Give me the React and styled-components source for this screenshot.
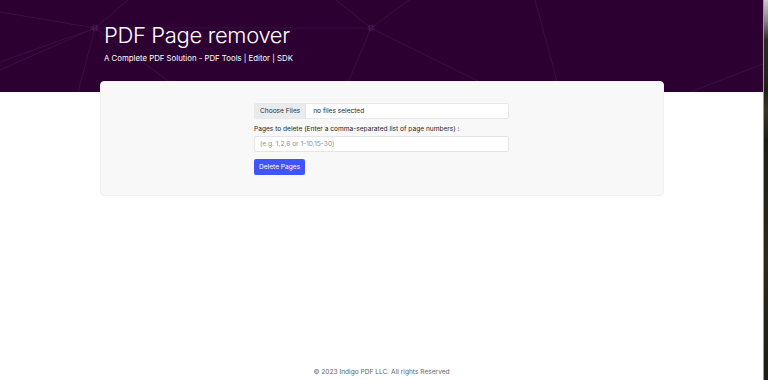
import React from "react";
import styled, { createGlobalStyle } from "styled-components";

const Global = createGlobalStyle`
  html, body { margin: 0; padding: 0; background: #ffffff; }
  body { font-family: Inter, "Noto Sans", "Liberation Sans", sans-serif; color: #212529; }
  * { box-sizing: border-box; }
`;

const Screen = styled.div`
  display: flex;
  width: 768px;
  height: 380px;
  overflow: hidden;
`;

const Page = styled.div`
  flex: 1;
  display: flex;
  flex-direction: column;
  min-width: 0;
`;

const SideStrip = styled.div`
  width: 5px;
  flex: none;
  border-left: 1px solid #9a9a9a;
  background: linear-gradient(180deg, #cfc9cf 0px, #8f8590 20px, #2a2a22 40px, #1e2018 90px, #3a3524 110px, #1c1e16 140px, #2c2a1a 260px, #1b1c15 380px);
`;

const Hero = styled.header`
  position: relative;
  height: 92px;
  background: #2d0032;
  padding: 22px 0 0 104px;
  overflow: hidden;
`;

const HeroArt = styled.svg`
  position: absolute;
  inset: 0;
  width: 100%;
  height: 100%;
`;

const HeroText = styled.div`
  position: relative;
  display: flex;
  flex-direction: column;
  gap: 5px;
`;

const Title = styled.h1`
  margin: 0;
  font-family: Inter, "Noto Sans", sans-serif;
  font-weight: 300;
  font-size: 22px;
  line-height: 26px;
  color: #ffffff;
  letter-spacing: -0.35px;
`;

const Subtitle = styled.p`
  margin: 0;
  font-size: 7.8px;
  line-height: 10px;
  color: #ffffff;
`;

const Card = styled.section`
  position: relative;
  align-self: center;
  width: 564px;
  margin-top: -11px;
  background: #f8f8f8;
  border: 1px solid #f0f0f0;
  border-radius: 4px;
  padding: 21px 0 20px;
  display: flex;
  justify-content: center;
`;

const Form = styled.form`
  width: 255px;
  display: flex;
  flex-direction: column;
`;

const FileBox = styled.div`
  display: flex;
  align-items: center;
  height: 16px;
  background: #ffffff;
  border: 1px solid #e6e8ea;
  border-radius: 2px;
  overflow: hidden;
  font-size: 6.6px;
`;

const FileButton = styled.span`
  height: 100%;
  display: flex;
  align-items: center;
  padding: 0 5px;
  background: #e9ecef;
  border-right: 1px solid #e0e3e6;
  color: #2b2f33;
`;

const FileName = styled.span`
  padding-left: 7px;
  color: #212529;
`;

const Label = styled.label`
  margin-top: 6px;
  font-size: 6.6px;
  line-height: 9px;
  color: #212529;
`;

const TextInput = styled.input`
  margin-top: 2px;
  height: 16px;
  width: 100%;
  border: 1px solid #e3e5e8;
  border-radius: 2px;
  background: #ffffff;
  padding: 0 5px;
  font-family: inherit;
  font-size: 6.6px;
  outline: none;
  &::placeholder { color: #8c9196; }
`;

const Submit = styled.button`
  margin-top: 7px;
  align-self: flex-start;
  height: 16px;
  padding: 0 5px;
  border: none;
  border-radius: 2px;
  background: #3f55fb;
  color: #ffffff;
  font-family: inherit;
  font-size: 6.6px;
`;

const Footer = styled.footer`
  margin-top: auto;
  height: 16px;
  display: flex;
  align-items: center;
  justify-content: center;
  font-size: 6.6px;
  color: #5f656b;
`;

const lines = [
  [0, 12, 95, 28], [95, 28, 128, 0], [95, 28, 0, 62], [95, 28, 78, 92],
  [95, 28, 371, 28], [95, 28, 170, 82], [371, 28, 336, 0], [371, 28, 409, 0],
  [371, 28, 344, 92], [371, 28, 500, 92], [535, 0, 560, 92], [690, 92, 763, 64],
  [0, 70, 95, 28],
];

const Dots = ({ cx, cy }) => {
  const pts = [];
  for (let i = -2; i <= 2; i++)
    for (let j = -2; j <= 2; j++)
      if (i * i + j * j <= 5) pts.push([cx + i * 1.4, cy + j * 1.4]);
  return pts.map(([x, y], k) => <circle key={k} cx={x} cy={y} r="0.45" fill="#6a3a70" />);
};

export default function App() {
  return (
    <>
      <Global />
      <Screen>
        <Page>
          <Hero>
            <HeroArt viewBox="0 0 763 92" preserveAspectRatio="none">
              {lines.map(([x1, y1, x2, y2], i) => (
                <line key={i} x1={x1} y1={y1} x2={x2} y2={y2} stroke="#42154a" strokeWidth="0.7" />
              ))}
              <Dots cx={95} cy={28} />
              <Dots cx={371} cy={28} />
            </HeroArt>
            <HeroText>
              <Title>PDF Page remover</Title>
              <Subtitle>A Complete PDF Solution - PDF Tools | Editor | SDK</Subtitle>
            </HeroText>
          </Hero>
          <Card>
            <Form onSubmit={(e) => e.preventDefault()}>
              <FileBox>
                <FileButton>Choose Files</FileButton>
                <FileName>no files selected</FileName>
              </FileBox>
              <Label>Pages to delete (Enter a comma-separated list of page numbers) :</Label>
              <TextInput placeholder="(e.g. 1,2,6 or 1-10,15-30)" />
              <Submit type="submit">Delete Pages</Submit>
            </Form>
          </Card>
          <Footer>© 2023 Indigo PDF LLC. All rights Reserved</Footer>
        </Page>
        <SideStrip />
      </Screen>
    </>
  );
}
